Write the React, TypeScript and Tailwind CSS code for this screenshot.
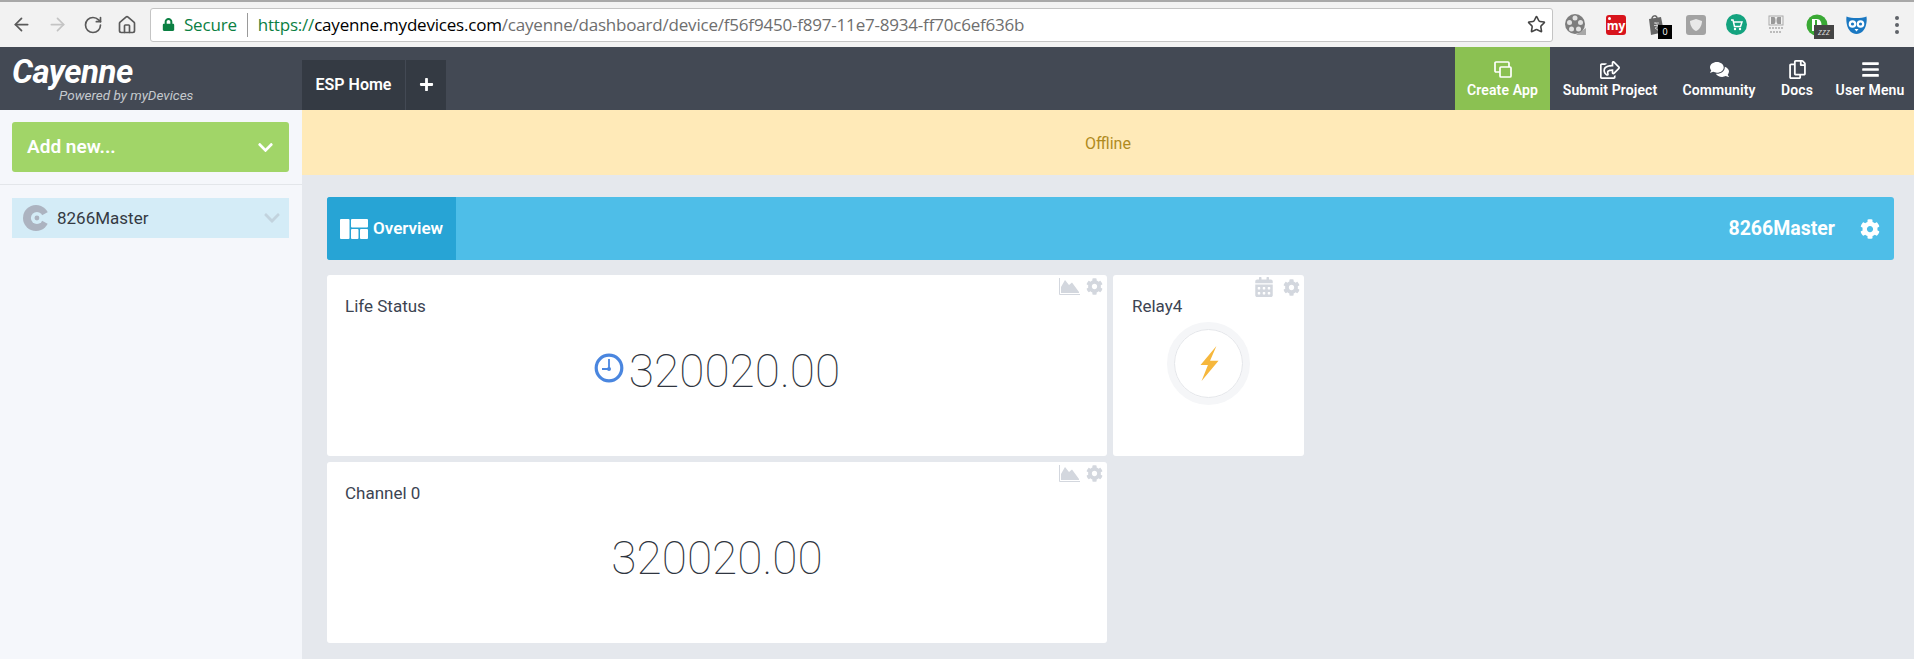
import React from "react";
import { ArrowLeft, ArrowRight, RotateCw, House, Star } from "lucide-react";
import { FaBars, FaCalendarAlt, FaChevronDown, FaCog, FaComments, FaLock, FaPlus, FaRegCopy, FaRegShareSquare } from "react-icons/fa";

const url = "f56f9450-f897-11e7-8934-ff70c6ef636b";

function Extensions() {
  return (
    <div className="flex items-center ml-[3px] h-full shrink-0">
      <div className="w-[40px] flex justify-center">
        <svg width="22" height="24" viewBox="0 0 22 24">
          <path d="M15 19 L21 15 L21 22 L11 22 Z" fill="#a8a8a8" />
          <circle cx="10" cy="11" r="10" fill="#7d7d7d" />
          <circle cx="10" cy="5" r="2.5" fill="#e2e2e2" />
          <circle cx="4.5" cy="9.5" r="2.5" fill="#e2e2e2" />
          <circle cx="15.5" cy="9.5" r="2.5" fill="#e2e2e2" />
          <circle cx="6.5" cy="16" r="2.5" fill="#e2e2e2" />
          <circle cx="13.5" cy="16" r="2.5" fill="#e2e2e2" />
        </svg>
      </div>
      <div className="w-[40px] flex justify-center">
        <div className="w-[20px] h-[20px] rounded-[3px] bg-[#d8141c] text-white text-[12px] font-bold leading-none flex items-end justify-center pb-[3px] relative">
          <span className="absolute left-[2px] top-[2px] w-[3px] h-[3px] rounded-full bg-white" />
          my
        </div>
      </div>
      <div className="w-[40px] flex justify-center relative">
        <svg width="20" height="22" viewBox="0 0 20 22">
          <path d="M3 5 L15 3 L18 18 L5 21 Z" fill="#666" />
          <path d="M6 5 C6 1 11 1 11 4" fill="none" stroke="#666" strokeWidth="1.5" />
          <path d="M8 9 H13 M8 11.5 H13 M9 9 C12 9 12 14 9 14 L13 17" fill="none" stroke="#ccc" strokeWidth="1" />
        </svg>
        <span className="absolute left-[22px] top-[11px] w-[14px] h-[14px] bg-black text-white text-[9px] leading-[14px] text-center">0</span>
      </div>
      <div className="w-[40px] flex justify-center">
        <div className="w-[20px] h-[20px] rounded-[3px] bg-[#a3a3a3] flex items-center justify-center">
          <svg width="14" height="14" viewBox="0 0 14 14"><path d="M7 1 L13 3 C13 8 10 12 7 13 C4 12 1 8 1 3 Z" fill="#e8e8e8" /></svg>
        </div>
      </div>
      <div className="w-[40px] flex justify-center">
        <div className="w-[21px] h-[21px] rounded-full bg-[#14a37f] flex items-center justify-center">
          <svg width="13" height="13" viewBox="0 0 13 13"><path d="M1 2 H3 L4.5 8.5 H10.5 L12 4 H3.5" fill="none" stroke="#fff" strokeWidth="1.5" /><circle cx="5" cy="11" r="1.2" fill="#fff" /><circle cx="10" cy="11" r="1.2" fill="#fff" /></svg>
        </div>
      </div>
      <div className="w-[40px] flex justify-center">
        <svg width="16" height="20" viewBox="0 0 16 20">
          <rect x="1" y="1" width="14" height="9" fill="none" stroke="#aaa" />
          <path d="M3 2 H6 C8 2 8 9 6 9 H3 Z M13 2 H10 C8 2 8 9 10 9 H13 Z" fill="#999" />
          <path d="M1 13 H15 M2 17 H14" stroke="#aaa" strokeWidth="1.6" strokeDasharray="2 1" />
        </svg>
      </div>
      <div className="w-[40px] flex justify-center relative">
        <svg width="22" height="22" viewBox="0 0 22 22" className="ml-[2px]">
          <circle cx="11" cy="11" r="10.5" fill="#3aa935" />
          <path d="M6 5 H11 C17 5 17 17 11 17 H6 Z" fill="#fff" />
          <rect x="9" y="6" width="2" height="10" fill="#3aa935" />
        </svg>
        <span className="absolute left-[18px] top-[11px] w-[20px] h-[14px] bg-[#444] text-[#ddd] text-[9px] leading-[14px] text-center italic">zzz</span>
      </div>
      <div className="w-[40px] flex justify-center">
        <svg width="21" height="18" viewBox="0 0 21 18">
          <path d="M0.5 0.5 C6 2.5 15 2.5 20.5 0.5 C21 4 20.5 7 20 9 C19 14 15 18 10.5 18 C6 18 2 14 1 9 C0.5 7 0 4 0.5 0.5 Z" fill="#1a78c2" />
          <circle cx="6.5" cy="8" r="3.8" fill="#fff" />
          <circle cx="14.5" cy="8" r="3.8" fill="#fff" />
          <circle cx="6.5" cy="8" r="1.6" fill="#1a78c2" />
          <circle cx="14.5" cy="8" r="1.6" fill="#1a78c2" />
          <path d="M8.5 13 L10.5 15.5 L12.5 13 Z" fill="#fff" />
        </svg>
      </div>
      <div className="w-[38px] flex flex-col items-start pl-[19px] gap-[3px]">
        <span className="w-[4px] h-[4px] rounded-full bg-[#5f6368]" />
        <span className="w-[4px] h-[4px] rounded-full bg-[#5f6368]" />
        <span className="w-[4px] h-[4px] rounded-full bg-[#5f6368]" />
      </div>
    </div>
  );
}

function BrowserBar() {
  return (
    <div className="h-[47px] bg-[#f2f2f2] border-t-2 border-[#a8a8a8] flex items-center font-['Open_Sans',sans-serif]">
      <div className="w-[150px] shrink-0 flex items-center text-[#5a5a5a] pl-[11px] gap-[15px]">
        <ArrowLeft size={21} />
        <ArrowRight size={21} className="text-[#c4c4c4]" />
        <RotateCw size={20} />
        <House size={20} className="-ml-[1px]" />
      </div>
      <div className="w-[1403px] shrink-0 h-[34px] bg-white border border-[#c4c4c4] rounded-[3px] flex items-center pl-[11px] pr-[6px] text-[17px] tracking-[-0.2px]">
        <FaLock className="text-[#0b8043] mr-[9px]" size={13} />
        <span className="text-[#0b8043]">Secure</span>
        <span className="w-px h-[24px] bg-[#9a9a9a] mx-[10px]" />
        <span className="text-[#0b8043]">https://</span>
        <span className="text-black">cayenne.mydevices.com</span>
        <span className="text-[#6e6e6e]">/cayenne/dashboard/device/{url}</span>
        <Star size={19} className="ml-auto text-[#444]" />
      </div>
      <Extensions />
    </div>
  );
}

function NavItem({ icon, label, width }: { icon: React.ReactNode; label: string; width: string }) {
  return (
    <div className={`${width} flex flex-col items-center pt-[12px]`}>
      <div className="h-[21px] flex items-center text-white">{icon}</div>
      <span className="text-[14px] font-semibold leading-[20px] tracking-[0.1px] text-white whitespace-nowrap">{label}</span>
    </div>
  );
}

function Header() {
  return (
    <div className="h-[63px] bg-[#434954] flex">
      <div className="w-[302px] pl-[12px] pt-[11px]">
        <div className="text-white italic font-bold text-[33px] leading-[28px] tracking-[-0.5px]">Cayenne</div>
        <div className="pl-[47px] pt-[1px] italic text-[13.5px] leading-[16px] text-[#c5c9ce]">Powered by myDevices</div>
      </div>
      <div className="self-end h-[50px] flex text-white">
        <div className="w-[103px] bg-[#343a43] flex items-center justify-center text-[16px] font-semibold">ESP Home</div>
        <div className="w-[40px] ml-px bg-[#343a43] flex items-center justify-center pb-[2px]"><FaPlus size={15} /></div>
      </div>
      <div className="ml-auto flex">
        <div className="w-[95px] bg-[#8bc152]">
          <NavItem
            width="w-full"
            label="Create App"
            icon={
              <svg width="18" height="18" viewBox="0 0 18 18" fill="none" stroke="#fff" strokeWidth="1.7">
                <rect x="1" y="1" width="14" height="10" rx="1" />
                <rect x="6" y="6" width="11" height="10" rx="1" fill="#8bc152" />
              </svg>
            }
          />
        </div>
        <NavItem width="w-[120px]" label="Submit Project" icon={<FaRegShareSquare size={20} />} />
        <NavItem width="w-[98px]" label="Community" icon={<FaComments size={19} />} />
        <NavItem width="w-[58px]" label="Docs" icon={<FaRegCopy size={19} />} />
        <NavItem width="w-[88px]" label="User Menu" icon={<FaBars size={19} />} />
      </div>
    </div>
  );
}

function Sidebar() {
  return (
    <div className="w-[302px] bg-[#f5f7fb]">
      <div className="h-[75px] border-b border-[#e3e6ea] pl-[12px] pr-[13px] pt-[12px]">
        <div className="h-[50px] bg-[#a1d568] rounded-[3px] flex items-center justify-between pl-[15px] pr-[15px] text-white">
          <span className="text-[19px] font-semibold">Add new...</span>
          <FaChevronDown size={17} />
        </div>
      </div>
      <div className="ml-[12px] mr-[13px] mt-[13px] h-[40px] bg-[#d4ecf7] flex items-center pl-[11px] pr-[8px]">
        <svg width="26" height="28" viewBox="0 0 28 28">
          <circle cx="14" cy="14" r="14" fill="#acb3c0" />
          <circle cx="15" cy="14" r="6.5" fill="#d4ecf7" />
          <path d="M15 14 L28 7 V21 Z" fill="#d4ecf7" />
          <circle cx="15" cy="14" r="2.6" fill="#acb3c0" />
        </svg>
        <span className="ml-[8px] pt-[1px] text-[17px] text-[#343a43]">8266Master</span>
        <FaChevronDown size={18} className="ml-auto text-[#c2d3de]" />
      </div>
    </div>
  );
}

function AreaIcon() {
  return (
    <svg width="21" height="17" viewBox="0 0 21 17" fill="#d3d7de">
      <path d="M0.5 0 V16.5 H21" fill="none" stroke="#d3d7de" />
      <path d="M2 15 V9 L6 2 L10 7 L13 4.5 L20 14 V15 Z" />
    </svg>
  );
}

function Card({ title, value, className, children }: { title: string; value: string; className: string; children?: React.ReactNode }) {
  return (
    <div className={`${className} h-[181px] bg-white rounded-[3px] relative flex flex-col`}>
      <div className="absolute right-[4px] top-[3px] flex items-center gap-[6px] text-[#d3d7de]">
        <AreaIcon />
        <FaCog size={17} />
      </div>
      <div className="pt-[21px] pl-[18px] text-[17px] leading-[20px] text-[#3c4452]">{title}</div>
      <div className="flex-1 flex items-center justify-center pb-[30px] text-[#2f3540]">
        {children}
        <span className="text-[46px] font-thin leading-none">{value}</span>
      </div>
    </div>
  );
}

function ClockIcon() {
  return (
    <svg width="30" height="30" viewBox="0 0 30 30" fill="none" stroke="#4a86df" className="mr-[5px] -mt-[7px]">
      <circle cx="15" cy="15" r="12.8" strokeWidth="3.2" />
      <path d="M15 6 V16 H8" strokeWidth="1.8" />
      <circle cx="15" cy="16" r="2" fill="#4a86df" stroke="none" />
    </svg>
  );
}

export default function App() {
  return (
    <div className="w-[1914px] h-[659px] overflow-hidden flex flex-col font-['Roboto',sans-serif] bg-[#e5e8ed]">
      <BrowserBar />
      <Header />
      <div className="flex-1 flex min-h-0">
        <Sidebar />
        <div className="flex-1">
          <div className="h-[65px] bg-[#ffeab8] flex items-center justify-center pt-[2px] text-[16px] text-[#b08a1e]">Offline</div>
          <div className="pl-[25px] pr-[20px] pt-[22px]">
            <div className="h-[63px] bg-[#4ebee8] rounded-[3px] flex items-center overflow-hidden text-white">
              <div className="w-[129px] h-full bg-[#27a4d5] flex items-center pl-[13px] gap-[5px]">
                <svg width="28" height="20" viewBox="0 0 28 20" fill="#fff">
                  <rect x="0" y="0" width="9.5" height="20" rx="1" />
                  <rect x="11" y="0" width="17" height="8.5" rx="1" />
                  <rect x="11" y="10" width="7.5" height="10" rx="1" />
                  <rect x="20" y="10" width="8" height="10" rx="1" />
                </svg>
                <span className="text-[17px] font-semibold">Overview</span>
              </div>
              <span className="ml-auto text-[19.5px] font-bold">8266Master</span>
              <FaCog size={20} className="ml-[25px] mr-[14px]" />
            </div>
            <div className="mt-[15px] flex flex-col gap-[6px]">
              <div className="flex gap-[6px]">
                <Card title="Life Status" value="320020.00" className="w-[780px]">
                  <ClockIcon />
                </Card>
                <div className="w-[191px] h-[181px] bg-white rounded-[3px] relative flex flex-col">
                  <div className="absolute right-[4px] top-[2px] flex items-center gap-[9px] text-[#d3d7de]">
                    <FaCalendarAlt size={20} />
                    <FaCog size={17} />
                  </div>
                  <div className="pt-[21px] pl-[19px] text-[17px] leading-[20px] text-[#3c4452]">Relay4</div>
                  <div className="mt-[6px] mx-auto w-[83px] h-[83px] rounded-full border-[7px] border-[#f5f6f8] flex items-center justify-center">
                    <div className="w-[69px] h-[69px] shrink-0 rounded-full border border-[#e4e6ea] flex items-center justify-center">
                      <svg width="20" height="35" viewBox="0 0 18 33" fill="#f6b73c"><path d="M16 0 L1 18 L8 18 L2 33 L18 14 L10 14 Z" /></svg>
                    </div>
                  </div>
                </div>
              </div>
              <Card title="Channel 0" value="320020.00" className="w-[780px]" />
            </div>
          </div>
        </div>
      </div>
    </div>
  );
}
